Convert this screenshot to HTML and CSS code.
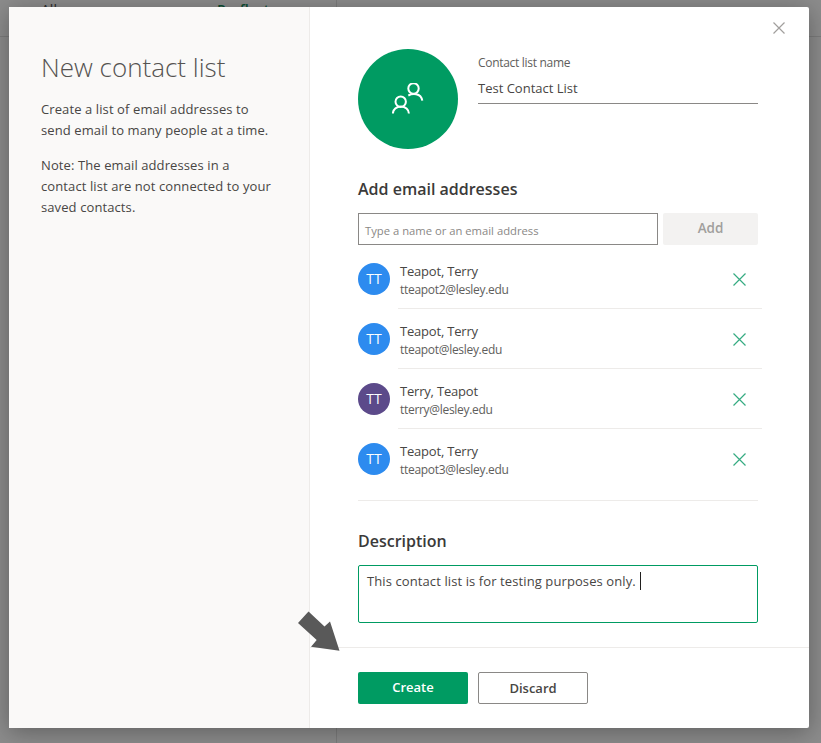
FILE: index.html
```html
<!DOCTYPE html>
<html lang="en">
<head>
<meta charset="utf-8">
<title>New contact list</title>
<link rel="stylesheet" href="styles.css">
</head>
<body>
<div class="backdrop">
  <div class="behind-top"><span class="behind-a">All</span><span class="behind-b">Preflect</span></div>
  <div class="behind-vline"></div>
</div>
<main class="dialog">
  <aside class="intro">
    <h1 class="intro-title">New contact list</h1>
    <p class="intro-text">Create a list of email addresses to send email to many people at a time.</p>
    <p class="intro-text">Note: The email addresses in a contact list are not connected to your saved contacts.</p>
  </aside>
  <section class="editor">
    <button class="close" aria-label="Close">
      <svg width="12" height="12" viewBox="0 0 12 12"><path d="M.5.5l11 11M11.500.5l-11 11" stroke="#a19f9d" stroke-width="1.200" fill="none"/></svg>
    </button>
    <div class="scroll">
      <div class="identity">
        <div class="group-avatar">
          <svg width="32" height="32" viewBox="0 0 32 32" fill="none" stroke="#fff" stroke-width="2">
            <circle cx="21.500" cy="5.500" r="5.200"/>
            <path d="M16.300 12.500C20 10.500 29 9.500 30.300 17.700"/>
            <circle cx="8.700" cy="18.700" r="5.200"/>
            <path d="M.9 30.500a8 7 0 0 1 16 0"/>
          </svg>
        </div>
        <div class="name-field">
          <div class="name-label">Contact list name</div>
          <div class="name-value">Test Contact List</div>
        </div>
      </div>
      <h2 class="section-title title-add">Add email addresses</h2>
      <div class="add-row">
        <div class="add-input">Type a name or an email address</div>
        <div class="add-btn">Add</div>
      </div>
      <ul class="people">
        <li class="person">
          <div class="initials blue">TT</div>
          <div class="person-text"><div class="person-name">Teapot, Terry</div><div class="person-mail">tteapot2@lesley.edu</div></div>
          <svg class="remove" width="13" height="13" viewBox="0 0 13 13"><path d="M.5.5l12 12M12.500.5l-12 12" stroke="#36ab82" stroke-width="1.200" fill="none"/></svg>
        </li>
        <li class="person">
          <div class="initials blue">TT</div>
          <div class="person-text"><div class="person-name">Teapot, Terry</div><div class="person-mail">tteapot@lesley.edu</div></div>
          <svg class="remove" width="13" height="13" viewBox="0 0 13 13"><path d="M.5.5l12 12M12.500.5l-12 12" stroke="#36ab82" stroke-width="1.200" fill="none"/></svg>
        </li>
        <li class="person">
          <div class="initials purple">TT</div>
          <div class="person-text"><div class="person-name">Terry, Teapot</div><div class="person-mail">tterry@lesley.edu</div></div>
          <svg class="remove" width="13" height="13" viewBox="0 0 13 13"><path d="M.5.5l12 12M12.500.5l-12 12" stroke="#36ab82" stroke-width="1.200" fill="none"/></svg>
        </li>
        <li class="person">
          <div class="initials blue">TT</div>
          <div class="person-text"><div class="person-name">Teapot, Terry</div><div class="person-mail">tteapot3@lesley.edu</div></div>
          <svg class="remove" width="13" height="13" viewBox="0 0 13 13"><path d="M.5.5l12 12M12.500.5l-12 12" stroke="#36ab82" stroke-width="1.200" fill="none"/></svg>
        </li>
      </ul>
      <div class="rule"></div>
      <h2 class="section-title title-desc">Description</h2>
      <div class="desc-box">This contact list is for testing purposes only.<span class="caret"></span></div>
    </div>
    <footer class="actions">
      <div class="btn btn-primary">Create</div>
      <div class="btn btn-secondary">Discard</div>
    </footer>
  </section>
</main>
<svg class="pointer" width="46" height="42" viewBox="0 0 46 42"><path d="M0 12L10.500.5 26.500 15.500 32 10.500 41.500 39.700 13 35.700 18.700 29z" fill="#595959"/></svg>
</body>
</html>
```
FILE: styles.css
```css
* { box-sizing: border-box; }
html, body { margin: 0; height: 100%; }
body {
  width: 821px;
  height: 743px;
  overflow: hidden;
  position: relative;
  background: #8a8a8a;
  font-family: "Open Sans", "Noto Sans", sans-serif;
  color: #323130;
  padding: 7px 12px 15px 9px;
  display: flex;
}
.backdrop { position: absolute; inset: 0; background: #8c8c8c; }
.behind-top {
  height: 37px;
  border-bottom: 1px solid #7c7c7c;
  position: relative;
  font-size: 14px;
  color: #2a2a2a;
  overflow: hidden;
}
.behind-a { position: absolute; left: 41px; top: 0; }
.behind-b { position: absolute; left: 217px; top: 0; color: #0b4d33; font-weight: 600; }
.behind-vline { position: absolute; left: 336px; top: 0; bottom: 0; width: 1px; background: #7c7c7c; }
.dialog {
  position: relative;
  width: 800px;
  height: 721px;
  display: flex;
  background: #fff;
  border-radius: 2px;
  box-shadow: 0 4px 24px rgba(0, 0, 0, .32);
}
.intro {
  width: 301px;
  flex: none;
  background: #faf9f8;
  border-right: 1px solid #edebe9;
  padding: 42px 34px 0 32px;
}
.intro-title {
  margin: 0 0 14px;
  font-size: 26px;
  line-height: 36px;
  font-weight: 300;
  color: #555351;
}
.intro-text {
  margin: 0 0 14px;
  font-size: 13px;
  letter-spacing: .1px;
  line-height: 21px;
  color: #484644;
}
.editor { flex: 1; position: relative; display: flex; flex-direction: column; }
.close {
  position: absolute;
  top: 15px;
  right: 24px;
  padding: 0;
  border: 0;
  background: none;
  line-height: 0;
}
.scroll { flex: 1; padding: 42px 0 0 48px; width: 452px; }
.identity { display: flex; gap: 20px; height: 100px; }
.group-avatar {
  width: 100px;
  height: 100px;
  flex: none;
  border-radius: 50%;
  background: #009b62;
  display: flex;
  align-items: center;
  justify-content: center;
}
.name-field { width: 280px; padding-top: 6px; }
.name-label { font-size: 12px; letter-spacing: -.3px; line-height: 16px; color: #605e5c; }
.name-value {
  margin-top: 7px;
  height: 26px;
  font-size: 13px;
  line-height: 20px;
  color: #484644;
  border-bottom: 1px solid #8a8886;
}
.section-title { margin: 0; font-size: 16px; line-height: 22px; font-weight: 600; color: #3b3a39; }
.title-add { margin-top: 29px; }
.add-row { display: flex; gap: 5px; margin-top: 13px; }
.add-input {
  width: 300px;
  height: 32px;
  border: 1px solid #8a8886;
  padding: 0 6px;
  font-size: 11.250px;
  line-height: 33px;
  color: #8a8886;
}
.add-btn {
  width: 95px;
  height: 32px;
  background: #f3f2f1;
  border-radius: 2px;
  font-size: 13.500px;
  font-weight: 600;
  line-height: 31px;
  text-align: center;
  color: #a19f9d;
}
.people { list-style: none; margin: 4px 0 0; padding: 0; width: 404px; }
.person { position: relative; height: 60px; display: flex; align-items: center; gap: 10px; }
.person + .person::before {
  content: "";
  position: absolute;
  left: 40px;
  right: 0;
  top: -1px;
  height: 1px;
  background: #edebe9;
}
.initials {
  width: 32px;
  height: 32px;
  flex: none;
  border-radius: 50%;
  color: #fff;
  font-size: 14px;
  font-weight: 500;
  line-height: 32px;
  text-align: center;
}
.blue { background: #2d8bef; }
.purple { background: #5c4a8a; }
.person-text { flex: 1; align-self: flex-start; padding-top: 13px; }
.person-name { font-size: 13px; letter-spacing: -.2px; line-height: 19px; color: #484644; }
.person-mail { font-size: 12px; letter-spacing: -.3px; line-height: 16px; margin-top: 1px; color: #605e5c; }
.remove { margin-right: 16px; flex: none; }
.rule { width: 400px; height: 1px; background: #edebe9; margin-top: 11px; }
.title-desc { margin-top: 29px; }
.desc-box {
  width: 400px;
  height: 58px;
  margin-top: 13px;
  border: 1px solid #009b62;
  border-radius: 2px;
  padding: 6px 8px;
  font-size: 13px;
  letter-spacing: .1px;
  line-height: 19px;
  color: #484644;
}
.caret { display: inline-block; width: 1px; height: 18px; background: #201f1e; margin-left: 4px; vertical-align: top; }
.actions {
  height: 81px;
  flex: none;
  border-top: 1px solid #edebe9;
  padding: 24px 0 0 48px;
  display: flex;
  gap: 10px;
}
.btn {
  width: 110px;
  height: 32px;
  border-radius: 2px;
  font-size: 13px;
  font-weight: 600;
  line-height: 31px;
  text-align: center;
}
.btn-primary { background: #009b62; color: #fff; }
.btn-secondary { background: #fff; border: 1px solid #8a8886; color: #484644; line-height: 30px; }
.pointer { position: absolute; left: 298px; top: 611px; }
```
